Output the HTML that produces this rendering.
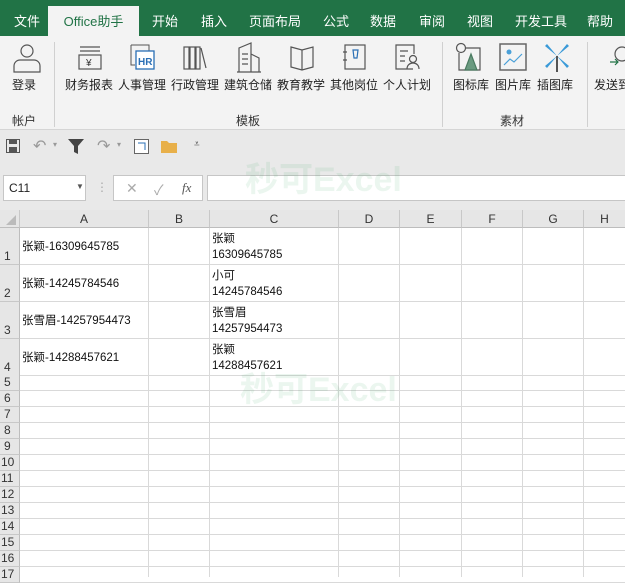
<!DOCTYPE html>
<html><head><meta charset="utf-8">
<style>
*{margin:0;padding:0;box-sizing:border-box}
body{width:625px;height:577px;overflow:hidden;background:#fff;font-family:"Liberation Sans","Noto Sans CJK SC",sans-serif;font-size:12px;color:#222;position:relative}
.abs{position:absolute}
.tabs{left:0;top:0;width:625px;height:36px;background:#217346}
.tab{position:absolute;top:11px;color:#fff;font-size:13px}
.act{left:48px;top:6px;width:91px;height:30px;background:#f3f3f3;color:#217346;text-align:center;padding-top:5px;font-size:13px}
.rib{left:0;top:36px;width:625px;height:94px;background:#f3f3f3;border-bottom:1px solid #d5d5d5}
.lbl{position:absolute;top:76px;font-size:12px;color:#333}
.btn{position:absolute;top:40px;font-size:12px;color:#222}
.ic{position:absolute;top:6px}
.sep{position:absolute;top:6px;width:1px;height:85px;background:#d0d0d0}
.qat{left:0;top:130px;width:625px;height:33px;background:#e9e9e9}
.fb{left:0;top:163px;width:625px;height:47px;background:#e9e9e9}
.grid{left:0;top:210px}
.ch{position:absolute;top:0;height:18px;background:#e6e6e6;border-right:1px solid #c8c8c8;border-bottom:1px solid #bdbdbd;text-align:center;font-size:12px;line-height:18px;color:#333}
.rh{position:absolute;left:0;width:20px;background:#e6e6e6;border-bottom:1px solid #c8c8c8;border-right:1px solid #bdbdbd;font-size:12px;color:#333;padding-left:4px}
.hl{position:absolute;left:20px;width:605px;height:1px;background:#d9d9d9}
.vl{position:absolute;top:18px;width:1px;height:349px;background:#d9d9d9}
.t{position:absolute;font-size:11.5px;color:#111}
.wm{position:absolute;font-size:34px;font-weight:bold;color:rgba(33,150,80,0.09);z-index:5}
</style></head><body>
<div class="abs tabs">
<span class="tab" style="left:14px">文件</span>
<div class="abs act">Office助手</div>
<span class="tab" style="left:152px">开始</span>
<span class="tab" style="left:201px">插入</span>
<span class="tab" style="left:249px">页面布局</span>
<span class="tab" style="left:323px">公式</span>
<span class="tab" style="left:370px">数据</span>
<span class="tab" style="left:419px">审阅</span>
<span class="tab" style="left:467px">视图</span>
<span class="tab" style="left:515px">开发工具</span>
<span class="tab" style="left:587px">帮助</span>
</div>
<div class="abs rib">
<svg class="ic" style="left:10px" width="34" height="32" viewBox="0 0 34 32" fill="none" stroke="#555" stroke-width="1.2"><circle cx="17" cy="9" r="6"/><path d="M4 30v-6a6 6 0 0 1 6-6h14a6 6 0 0 1 6 6v6z"/></svg>
<span class="btn" style="left:12px">登录</span>
<span class="lbl" style="left:12px">帐户</span>
<div class="sep" style="left:54px"></div>
<svg class="ic" style="left:76px" width="28" height="30" viewBox="0 0 28 30" fill="none" stroke="#555" stroke-width="1.2"><path d="M4 5h20M4 9h20"/><rect x="3" y="13" width="22" height="14"/><text x="10" y="24" font-size="10" fill="#333" stroke="none">¥</text></svg>
<svg class="ic" style="left:128px" width="28" height="30" viewBox="0 0 28 30" fill="none"><path d="M3 3h18v6" stroke="#555"/><path d="M3 3v20h4" stroke="#555"/><rect x="8" y="9" width="18" height="18" fill="#fff" stroke="#2a6fb5" stroke-width="1.3"/><text x="10" y="23" font-size="10" font-weight="bold" fill="#2a6fb5">HR</text></svg>
<svg class="ic" style="left:181px" width="28" height="30" viewBox="0 0 28 30" fill="none" stroke="#555" stroke-width="1.2"><rect x="3" y="5" width="5" height="22"/><rect x="9" y="5" width="5" height="22"/><rect x="15" y="5" width="4" height="22"/><path d="M20 6l5 20"/></svg>
<svg class="ic" style="left:235px" width="28" height="32" viewBox="0 0 28 32" fill="none" stroke="#555" stroke-width="1.2"><path d="M4 30V6l12-5v29M16 12l8 4v14M2 30h24M7 12h6M7 17h6M7 22h6"/></svg>
<svg class="ic" style="left:288px" width="28" height="30" viewBox="0 0 28 30" fill="none" stroke="#555" stroke-width="1.2"><path d="M3 5l11 3 11-3v20l-11 3-11-3zM14 8v20"/></svg>
<svg class="ic" style="left:341px" width="28" height="30" viewBox="0 0 28 30" fill="none" stroke="#555" stroke-width="1.2"><rect x="4" y="3" width="20" height="24"/><path d="M12 8h5l-1 8h-3z" stroke="#2a6fb5"/><path d="M2 10h4M2 18h4"/></svg>
<svg class="ic" style="left:393px" width="28" height="30" viewBox="0 0 28 30" fill="none" stroke="#555" stroke-width="1.2"><path d="M20 27H3V3h18v9M7 9h8M7 14h5M7 19h5"/><circle cx="20" cy="17" r="3.5"/><path d="M14 27c0-4 3-6 6-6s6 2 6 6"/></svg>
<span class="btn" style="left:65px">财务报表</span>
<span class="btn" style="left:118px">人事管理</span>
<span class="btn" style="left:171px">行政管理</span>
<span class="btn" style="left:224px">建筑仓储</span>
<span class="btn" style="left:277px">教育教学</span>
<span class="btn" style="left:330px">其他岗位</span>
<span class="btn" style="left:383px">个人计划</span>
<span class="lbl" style="left:236px">模板</span>
<div class="sep" style="left:442px"></div>
<svg class="ic" style="left:455px" width="30" height="32" viewBox="0 0 30 32" fill="none" stroke="#555" stroke-width="1.2"><circle cx="6" cy="6" r="4.5"/><path d="M11 6h14v22H4V11"/><path d="M10 28l6-16 6 16z" fill="#6a9a80" stroke="#4a7a60"/></svg>
<svg class="ic" style="left:498px" width="30" height="30" viewBox="0 0 30 30" fill="none"><rect x="2" y="2" width="26" height="26" stroke="#666" stroke-width="1.5"/><circle cx="11" cy="10" r="2.5" fill="#4aa0d8"/><path d="M6 23l6-6 4 3 8-8" stroke="#4aa0d8" stroke-width="1.2"/></svg>
<svg class="ic" style="left:542px" width="30" height="32" viewBox="0 0 30 32" fill="#3a9ad8"><path d="M15 14L5 2l-2 2zM15 14L25 2l2 2zM15 14L5 26l-2-2zM15 14l10 12 2-2z"/><rect x="14" y="14" width="2" height="16" fill="#555"/></svg>
<span class="btn" style="left:453px">图标库</span>
<span class="btn" style="left:495px">图片库</span>
<span class="btn" style="left:537px">插图库</span>
<span class="lbl" style="left:500px">素材</span>
<div class="sep" style="left:587px"></div>
<svg class="ic" style="left:610px" width="15" height="30" viewBox="0 0 15 30" fill="none" stroke="#555" stroke-width="1.2"><circle cx="12" cy="12" r="7"/><path d="M0 20h8M5 17l3 3-3 3" stroke="#217346"/></svg>
<span class="btn" style="left:594px;white-space:nowrap">发送到</span>
</div>
<div class="abs qat">
<svg class="abs" style="left:6px;top:9px" width="14" height="14" viewBox="0 0 14 14"><rect x="0.5" y="0.5" width="13" height="13" fill="none" stroke="#555"/><rect x="3" y="1" width="8" height="4" fill="#555"/><rect x="3" y="8" width="8" height="5" fill="#555"/></svg>
<span class="abs" style="left:33px;top:6px;color:#999;font-size:16px">↶</span><span class="abs" style="left:53px;top:10px;color:#999;font-size:8px">▾</span>
<svg class="abs" style="left:68px;top:9px" width="16" height="15" viewBox="0 0 16 15"><path d="M0 0h16l-6 7v8l-4-2V7z" fill="#444"/></svg>
<span class="abs" style="left:97px;top:6px;color:#999;font-size:16px">↷</span><span class="abs" style="left:117px;top:10px;color:#999;font-size:8px">▾</span>
<svg class="abs" style="left:134px;top:9px" width="15" height="15" viewBox="0 0 15 15"><rect x="0.5" y="0.5" width="14" height="14" fill="#fff" stroke="#666"/><path d="M4 4h7v7" stroke="#2a6fb5" fill="none"/></svg>
<svg class="abs" style="left:161px;top:9px" width="18" height="14" viewBox="0 0 18 14"><path d="M0 2h6l2 2h8v10H0z" fill="#e8b04a"/></svg>
<span class="abs" style="left:194px;top:9px;font-size:10px;color:#444">⩡</span>
</div>
<div class="abs fb">
<div class="abs" style="left:3px;top:12px;width:83px;height:26px;background:#fff;border:1px solid #c6c6c6;padding:5px 0 0 5px;font-size:12px">C11<span class="abs" style="left:72px;top:6px;font-size:8px;color:#555">▼</span></div>
<span class="abs" style="left:96px;top:17px;color:#aaa">⋮</span>
<div class="abs" style="left:113px;top:12px;width:90px;height:26px;background:#fff;border:1px solid #c6c6c6">
<span class="abs" style="left:12px;top:4px;color:#aaa;font-size:14px">✕</span>
<span class="abs" style="left:40px;top:4px;color:#aaa;font-size:14px">✓</span>
<span class="abs" style="left:68px;top:4px;color:#555;font-style:italic;font-family:'Liberation Serif',serif;font-size:13px">fx</span>
</div>
<div class="abs" style="left:207px;top:12px;width:420px;height:26px;background:#fff;border:1px solid #c6c6c6"></div>
</div>
<span class="wm" style="left:245px;top:152px">秒可Excel</span>
<div class="abs grid" style="width:625px;height:367px">
<div class="ch" style="left:0;width:20px"><svg width="10" height="10" style="position:absolute;left:6px;top:5px"><path d="M10 0v10H0z" fill="#bbb"/></svg></div>
<div class="ch" style="left:20px;width:129px">A</div>
<div class="ch" style="left:149px;width:61px">B</div>
<div class="ch" style="left:210px;width:129px">C</div>
<div class="ch" style="left:339px;width:61px">D</div>
<div class="ch" style="left:400px;width:62px">E</div>
<div class="ch" style="left:462px;width:61px">F</div>
<div class="ch" style="left:523px;width:61px">G</div>
<div class="ch" style="left:584px;width:41px;border-right:none">H</div>
<div class="rh" style="top:18px;height:37px;padding-top:21px">1</div>
<div class="rh" style="top:55px;height:37px;padding-top:21px">2</div>
<div class="rh" style="top:92px;height:37px;padding-top:21px">3</div>
<div class="rh" style="top:129px;height:37px;padding-top:21px">4</div>
<div class="hl" style="top:54px"></div><div class="hl" style="top:91px"></div><div class="hl" style="top:128px"></div><div class="hl" style="top:165px"></div>
<div class="vl" style="left:148px"></div><div class="vl" style="left:209px"></div><div class="vl" style="left:338px"></div><div class="vl" style="left:399px"></div><div class="vl" style="left:461px"></div><div class="vl" style="left:522px"></div><div class="vl" style="left:583px"></div>
<span class="t" style="left:22px;top:28px">张颖-16309645785</span>
<span class="t" style="left:22px;top:65px">张颖-14245784546</span>
<span class="t" style="left:22px;top:102px">张雪眉-14257954473</span>
<span class="t" style="left:22px;top:139px">张颖-14288457621</span>
<span class="t" style="left:212px;top:20px">张颖</span><span class="t" style="left:212px;top:39px">16309645785</span>
<span class="t" style="left:212px;top:57px">小可</span><span class="t" style="left:212px;top:76px">14245784546</span>
<span class="t" style="left:212px;top:94px">张雪眉</span><span class="t" style="left:212px;top:113px">14257954473</span>
<span class="t" style="left:212px;top:131px">张颖</span><span class="t" style="left:212px;top:150px">14288457621</span>
<span class="wm" style="left:240px;top:152px">秒可Excel</span>
</div>
<div id="rows"></div>
<script>
var h='';for(var i=5;i<=17;i++){var y=375+(i-5)*16;h+='<div class="rh" style="top:'+y+'px;height:16px;line-height:15px;padding-left:'+(i<10?4:1)+'px">'+i+'</div><div class="hl" style="top:'+(y+15)+'px"></div>';}
document.getElementById('rows').innerHTML=h;
</script>
</body></html>
